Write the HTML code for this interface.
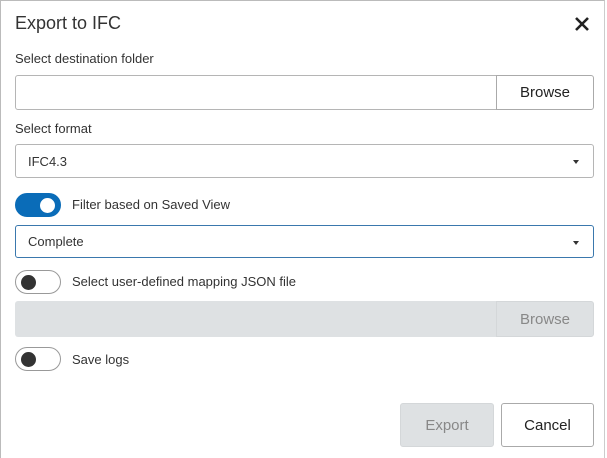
<!DOCTYPE html>
<html><head><style>
body{margin:0;width:607px;height:458px;background:#fff;font-family:"Liberation Sans",sans-serif;color:#333;position:relative;overflow:hidden}
.frame{position:absolute;left:0;top:0;width:605px;height:458px;border-left:1px solid #bbb;border-top:1px solid #bbb;border-right:1px solid #ccc;box-sizing:border-box}
.a{position:absolute}
.lbl{font-size:13px;color:#333}
.box{border:1px solid #b5b5b5;border-radius:3px;box-sizing:border-box;background:#fff}
.caret{position:absolute;right:14px;top:50%;margin-top:-1px;width:0;height:0;border-left:3px solid transparent;border-right:3px solid transparent;border-top:4px solid #333}
.tog{width:46px;height:24px;border-radius:12px;box-sizing:border-box;border:1px solid #999;background:#fff}
.tog i{position:absolute;left:5px;top:3.5px;width:15px;height:15px;border-radius:50%;background:#333}
.on{background:#0a6cb8;border-color:#0a6cb8}
.on i{left:24px;background:#fff}
.btn{display:flex;align-items:center;justify-content:center;font-size:15px;box-sizing:border-box;border:1px solid #aaa;border-radius:3px;background:#fff;color:#222}
</style></head><body>
<div class="frame"></div>
<div class="a" style="left:15px;top:13px;font-size:18px;color:#333">Export to IFC</div>
<svg class="a" style="left:574px;top:16px" width="16" height="16" viewBox="0 0 16 16"><path d="M2 2L14 14M14 2L2 14" stroke="#222" stroke-width="2.6"/></svg>
<div class="a lbl" style="left:15px;top:51px">Select destination folder</div>
<div class="a box" style="left:15px;top:75px;width:482px;height:35px;border-radius:3px 0 0 3px"></div>
<div class="a btn" style="left:496px;top:75px;width:98px;height:35px;border-radius:0 3px 3px 0">Browse</div>
<div class="a lbl" style="left:15px;top:121px">Select format</div>
<div class="a box" style="left:15px;top:144px;width:579px;height:34px"><span class="a" style="left:12px;top:9px;font-size:13px">IFC4.3</span><span class="caret"></span></div>
<div class="a tog on" style="left:15px;top:193px"><i></i></div>
<div class="a lbl" style="left:72px;top:197px">Filter based on Saved View</div>
<div class="a box" style="left:15px;top:225px;width:579px;height:33px;border-color:#3a78ad"><span class="a" style="left:12px;top:8px;font-size:13px">Complete</span><span class="caret"></span></div>
<div class="a tog" style="left:15px;top:270px"><i></i></div>
<div class="a lbl" style="left:72px;top:274px">Select user-defined mapping JSON file</div>
<div class="a" style="left:15px;top:301px;width:482px;height:36px;background:#dee1e3;border-radius:3px 0 0 3px"></div>
<div class="a btn" style="left:496px;top:301px;width:98px;height:36px;background:#dee1e3;border:1px solid #d4d7d9;color:#888;border-radius:0 3px 3px 0">Browse</div>
<div class="a tog" style="left:15px;top:347px"><i></i></div>
<div class="a lbl" style="left:72px;top:352px">Save logs</div>
<div class="a btn" style="left:400px;top:403px;width:94px;height:44px;background:#dee1e3;border-color:#d4d7d9;color:#888">Export</div>
<div class="a btn" style="left:501px;top:403px;width:93px;height:44px">Cancel</div>
</body></html>
